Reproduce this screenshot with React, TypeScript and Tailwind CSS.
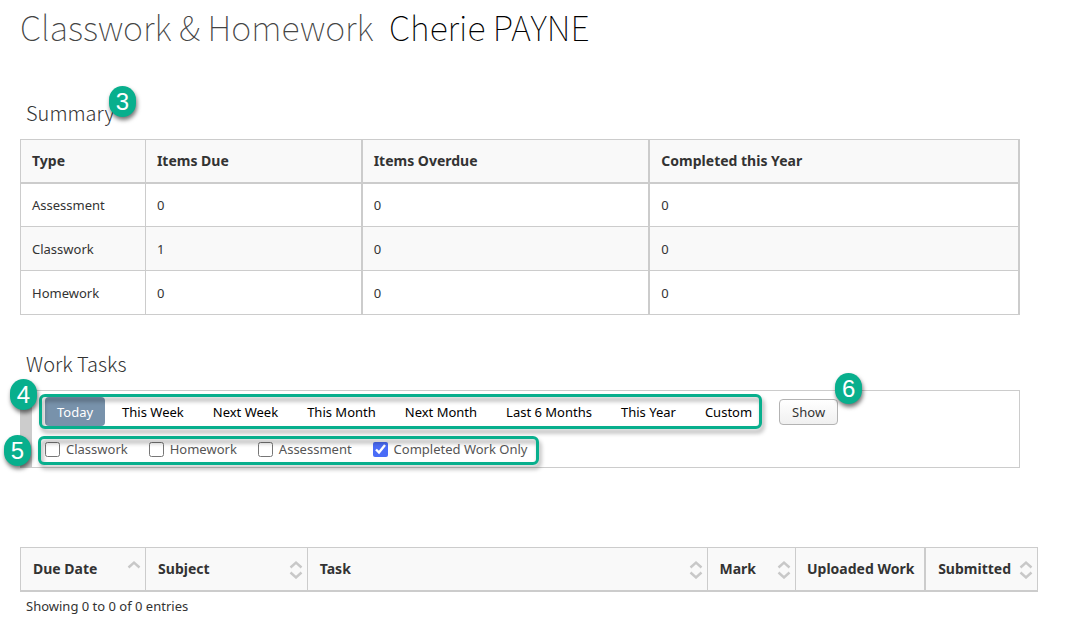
import { useState } from 'react';
import type { ReactNode } from 'react';

const summaryRows = [
  { type: 'Assessment', due: 0, overdue: 0, completed: 0 },
  { type: 'Classwork', due: 1, overdue: 0, completed: 0 },
  { type: 'Homework', due: 0, overdue: 0, completed: 0 },
];

const periods = [
  'Today',
  'This Week',
  'Next Week',
  'This Month',
  'Next Month',
  'Last 6 Months',
  'This Year',
  'Custom',
];

const filters = [
  { id: 'classwork', label: 'Classwork', checked: false },
  { id: 'homework', label: 'Homework', checked: false },
  { id: 'assessment', label: 'Assessment', checked: false },
  { id: 'completed', label: 'Completed Work Only', checked: true },
];

type Sort = 'asc' | 'both';

// Numbered callout
function Marker({ className, children }: { className: string; children: ReactNode }) {
  return (
    <span
      className={`absolute z-10 flex h-[31px] w-[27px] items-center justify-center rounded-full bg-[#08af8d] pt-px font-['Liberation_Sans',sans-serif] text-[24px] leading-none font-normal text-white shadow-[1px_3px_4px_rgba(0,0,0,0.55)] ${className}`}
    >
      {children}
    </span>
  );
}

// Green frame laid over a group of controls
function Frame({ className }: { className: string }) {
  return (
    <span
      className={`pointer-events-none absolute rounded-md border-3 border-[#08af8d] drop-shadow-[2px_4px_2px_rgba(0,0,0,0.35)] ${className}`}
    />
  );
}

function SortIcon({ sort }: { sort: Sort }) {
  return (
    <svg width="14" height="20" viewBox="0 0 14 20" fill="none" stroke="#c8c8c8" strokeWidth="2.4" className="shrink-0">
      <path d="M1.5 8.5 7 3.5 12.5 8.5" />
      {sort === 'both' && <path d="M1.5 13.5 7 18.5 12.5 13.5" />}
    </svg>
  );
}

function SortHeader({ label, sort = 'both' }: { label: string; sort?: Sort }) {
  return (
    <th className="h-11 border-r border-b-2 border-[#ccc] pr-1 pl-3 text-left">
      <button type="button" className="flex w-full items-center justify-between font-bold">
        {label}
        <SortIcon sort={sort} />
      </button>
    </th>
  );
}

export default function App() {
  const [period, setPeriod] = useState('Today');

  return (
    <div className="min-h-screen bg-white pr-[41px] pl-5 font-['Noto_Sans',sans-serif] text-[13px] leading-5 text-[#333]">
      <h1 className="pt-[3px] font-['Noto_Sans_CJK_SC',sans-serif] text-[34px] leading-[48px] font-thin text-[#444]">
        Classwork &amp; Homework <span className="ml-2 text-black">Cherie PAYNE</span>
      </h1>

      {/* Summary */}
      <section className="mt-[47px] mr-[18px]">
        <h2 className="relative ml-[6px] w-fit font-['Noto_Sans_CJK_SC',sans-serif] text-[20px] leading-[30px] font-light">
          Summary
          <Marker className="-top-3 left-[83px]">3</Marker>
        </h2>
        <table className="mt-[11px] w-full table-fixed border-separate border-spacing-0 border-t border-l border-[#ccc]">
          <colgroup>
            <col className="w-[12.5%]" />
            <col className="w-[21.7%]" />
            <col className="w-[28.8%]" />
            <col />
          </colgroup>
          <thead className="text-sm">
            <tr className="bg-[#f9f9f9] text-left">
              <th className="h-11 border-r border-b-2 border-[#ccc] px-[11px]">Type</th>
              <th className="border-r-2 border-b-2 border-[#ccc] px-[11px]">Items Due</th>
              <th className="border-r-2 border-b-2 border-[#ccc] px-[11px]">Items Overdue</th>
              <th className="border-r-2 border-b-2 border-[#ccc] px-[11px]">Completed this Year</th>
            </tr>
          </thead>
          <tbody>
            {summaryRows.map((row) => (
              <tr key={row.type} className="h-11 first:h-[43px] even:bg-[#f9f9f9]">
                <td className="border-r border-b border-[#ccc] px-[11px]">{row.type}</td>
                <td className="border-r-2 border-b border-[#ccc] px-[11px]">{row.due}</td>
                <td className="border-r-2 border-b border-[#ccc] px-[11px]">{row.overdue}</td>
                <td className="border-r-2 border-b border-[#ccc] px-[11px]">{row.completed}</td>
              </tr>
            ))}
          </tbody>
        </table>
      </section>

      {/* Work Tasks */}
      <section className="mt-[34px] mr-[18px]">
        <h2 className="ml-[6px] font-['Noto_Sans_CJK_SC',sans-serif] text-[20px] leading-[30px] font-light">
          Work Tasks
        </h2>
        <div className="relative mt-[11px] border border-l-12 border-[#ccc] pt-[6px] pb-2 pl-[13px]">
          <Marker className="-top-3 -left-[22px]">4</Marker>
          <Marker className="top-[44px] -left-[28px]">5</Marker>

          <div className="flex items-center gap-[15px]">
            <div className="relative flex gap-[5px]">
              {periods.map((name) => (
                <button
                  key={name}
                  type="button"
                  onClick={() => setPeriod(name)}
                  className={`h-[29px] rounded-sm px-3 whitespace-nowrap ${
                    name === period ? 'bg-[#7892ab] text-white' : 'text-black'
                  }`}
                >
                  {name}
                </button>
              ))}
              <Frame className="-top-[3px] right-[2px] -bottom-[3px] -left-[6px]" />
            </div>
            <div className="relative">
              <button
                type="button"
                className="h-[26px] rounded-[4px] border border-[#b3b3b3] bg-linear-to-b from-white to-[#f0f0f0] px-3"
              >
                Show
              </button>
              <Marker className="-top-[26px] left-[56px]">6</Marker>
            </div>
          </div>

          <div className="relative mt-[13px] flex w-fit gap-[21px] text-[#555]">
            {filters.map((filter) => (
              <label key={filter.id} htmlFor={filter.id} className="flex items-center gap-[6px]">
                <input
                  id={filter.id}
                  type="checkbox"
                  defaultChecked={filter.checked}
                  className="size-[15px] accent-[#4a6cf7]"
                />
                {filter.label}
              </label>
            ))}
            <Frame className="-top-[3px] -right-3 -bottom-[6px] -left-[7px]" />
          </div>
        </div>
      </section>

      {/* Task list */}
      <table className="mt-[79px] w-full table-fixed border-separate border-spacing-0 border-t border-l border-[#ccc] text-sm">
        <colgroup>
          <col className="w-[12.3%]" />
          <col className="w-[15.9%]" />
          <col />
          <col className="w-[8.7%]" />
          <col className="w-[12.8%]" />
          <col className="w-[11%]" />
        </colgroup>
        <thead>
          <tr className="bg-[#f9f9f9]">
            <SortHeader label="Due Date" sort="asc" />
            <SortHeader label="Subject" />
            <SortHeader label="Task" />
            <SortHeader label="Mark" />
            <th className="border-r-2 border-b-2 border-[#ccc] pl-[11px] text-left whitespace-nowrap">Uploaded Work</th>
            <SortHeader label="Submitted" />
          </tr>
        </thead>
      </table>
      <p className="mt-1 ml-[6px]">Showing 0 to 0 of 0 entries</p>
    </div>
  );
}
